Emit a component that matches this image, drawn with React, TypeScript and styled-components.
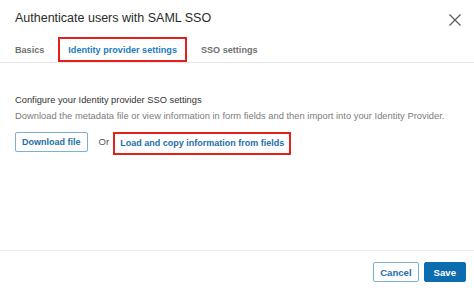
import React from 'react'
import styled, { createGlobalStyle } from 'styled-components'

const GlobalStyle = createGlobalStyle`
  *, *::before, *::after {
    box-sizing: border-box;
  }
  html, body {
    margin: 0;
    padding: 0;
    background: #ffffff;
  }
  body {
    font-family: "Liberation Sans", Arial, sans-serif;
    color: #333333;
  }
`

const App = () => {
  const [tab, setTab] = React.useState<number>(1)
  const tabs = ['Basics', 'Identity provider settings', 'SSO settings']

  return (
    <>
      <GlobalStyle />
      <Dialog>
        <Header>
          <Title>Authenticate users with SAML SSO</Title>
          <Close aria-label="Close">
            <svg width="12" height="12" viewBox="0 0 12 12">
              <path d="M0.5 0.5 L11.5 11.5 M11.5 0.5 L0.5 11.5" stroke="#5a5a5a" strokeWidth="1.2" fill="none" />
            </svg>
          </Close>
        </Header>

        <TabBar>
          {tabs.map((t, i) => (
            <Tab key={t} active={i === tab} marked={i === 1} onClick={() => setTab(i)}>
              {t}
            </Tab>
          ))}
        </TabBar>

        <Body>
          <Heading>Configure your Identity provider SSO settings</Heading>
          <Hint>
            Download the metadata file or view information in form fields and then import into your Identity Provider.
          </Hint>
          <Actions>
            <OutlineButton>Download file</OutlineButton>
            <Or>Or</Or>
            <LinkBox>
              <LinkText>Load and copy information from fields</LinkText>
            </LinkBox>
          </Actions>
        </Body>

        <Footer>
          <OutlineButton wide>Cancel</OutlineButton>
          <PrimaryButton>Save</PrimaryButton>
        </Footer>
      </Dialog>
    </>
  )
}

export default App

const Dialog = styled.div`
  width: 474px;
  height: 290px;
  display: flex;
  flex-direction: column;
  background: #ffffff;
`

const Header = styled.div`
  display: flex;
  align-items: center;
  justify-content: space-between;
  height: 36px;
  padding: 0 12px 0 15px;
`

const Title = styled.div`
  font-size: 12.5px;
  color: #2b2b2b;
`

const Close = styled.div`
  width: 14px;
  height: 14px;
  display: flex;
  align-items: center;
  justify-content: center;
  margin-top: 4px;
`

const TabBar = styled.div`
  display: flex;
  align-items: flex-end;
  height: 27px;
  padding-left: 15px;
  border-bottom: 1px solid #e6e6e6;
`

const Tab = styled.div<{ active: boolean; marked: boolean }>`
  font-size: 9.1px;
  font-weight: bold;
  color: ${p => (p.active ? '#1b7bbd' : '#707070')};
  height: 25px;
  display: flex;
  align-items: center;
  margin-right: 14px;
  padding: ${p => (p.marked ? '0 8px' : '0')};
  border: ${p => (p.marked ? '2px solid #e3211c' : 'none')};
  cursor: pointer;
`

const Body = styled.div`
  flex: 1;
  padding: 31px 15px 0 15px;
`

const Heading = styled.div`
  font-size: 9.3px;
  line-height: 13px;
  color: #333333;
`

const Hint = styled.div`
  font-size: 9.4px;
  line-height: 13px;
  color: #7d7d7d;
  margin-top: 2px;
`

const Actions = styled.div`
  display: flex;
  align-items: flex-start;
  margin-top: 10px;
`

const OutlineButton = styled.button<{ wide?: boolean }>`
  font-family: "Liberation Sans", Arial, sans-serif;
  font-size: ${p => (p.wide ? '9.6px' : '9px')};
  font-weight: bold;
  color: #1d6fa8;
  background: #ffffff;
  border: 1px solid #7cb0d4;
  border-radius: 2px;
  height: 20px;
  padding: 0 6px;
  cursor: pointer;
`

const Or = styled.span`
  font-size: 9.6px;
  line-height: 20px;
  color: #555555;
  margin: 0 4px 0 11px;
`

const LinkBox = styled.div`
  border: 2px solid #e3211c;
  height: 23px;
  display: flex;
  align-items: flex-start;
  padding: 2px 5px 0 5px;
`

const LinkText = styled.span`
  font-size: 9px;
  line-height: 14px;
  font-weight: bold;
  color: #1d6fa8;
`

const Footer = styled.div`
  display: flex;
  justify-content: flex-end;
  align-items: flex-start;
  gap: 5px;
  height: 40px;
  padding: 11px 8px 0 0;
  border-top: 1px solid #ececec;
`

const PrimaryButton = styled.button`
  font-family: "Liberation Sans", Arial, sans-serif;
  font-size: 9.6px;
  font-weight: bold;
  color: #ffffff;
  background: #0b6db0;
  border: 1px solid #0b6db0;
  border-radius: 2px;
  height: 20px;
  padding: 0 9px;
  cursor: pointer;
`
